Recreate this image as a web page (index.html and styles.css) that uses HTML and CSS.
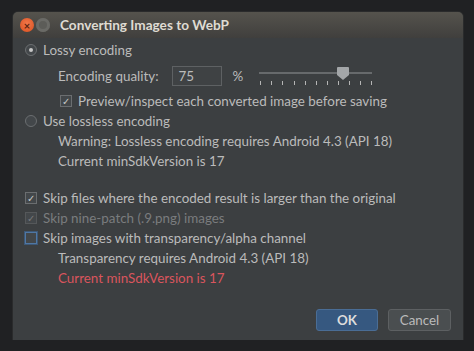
FILE: index.html
```html
<!DOCTYPE html>
<html lang="en">
<head>
    <meta charset="UTF-8">
    <title>Converting Images to WebP</title>
    <link rel="stylesheet" href="styles.css">
</head>
<body>
    <div class="dialog">
        <div class="titlebar">
            <span class="win-btn close">&#215;</span>
            <span class="win-btn minimize"></span>
            <span class="title">Converting Images to WebP</span>
        </div>

        <div class="content">
            <div class="row">
                <span class="radio checked"></span>
                <span>Lossy encoding</span>
            </div>

            <div class="row quality indent">
                <span class="label">Encoding quality:</span>
                <span class="field">75</span>
                <span class="percent">%</span>
                <svg class="slider" width="116" height="22" viewBox="0 0 116 22">
                    <rect x="0" y="5" width="113" height="2" fill="#676a6c"/>
                    <g stroke="#b5b5b5" stroke-width="1">
                        <line x1="1.5" y1="14" x2="1.5" y2="18"/>
                        <line x1="12.5" y1="14" x2="12.5" y2="18"/>
                        <line x1="23.5" y1="14" x2="23.5" y2="18"/>
                        <line x1="35.5" y1="14" x2="35.5" y2="18"/>
                        <line x1="46.5" y1="14" x2="46.5" y2="18"/>
                        <line x1="57.5" y1="14" x2="57.5" y2="18"/>
                        <line x1="68.5" y1="14" x2="68.5" y2="18"/>
                        <line x1="79.5" y1="14" x2="79.5" y2="18"/>
                        <line x1="90.5" y1="14" x2="90.5" y2="18"/>
                        <line x1="101.5" y1="14" x2="101.5" y2="18"/>
                        <line x1="112.5" y1="14" x2="112.5" y2="18"/>
                    </g>
                    <path d="M79 0 L89 0 Q90 0 90 1 L90 8 L84 13 L78 8 L78 1 Q78 0 79 0 Z" fill="#a3a6a8"/>
                </svg>
            </div>

            <div class="row sub">
                <span class="check checked">&#10003;</span>
                <span>Preview/inspect each converted image before saving</span>
            </div>

            <div class="row">
                <span class="radio"></span>
                <span>Use lossless encoding</span>
            </div>
            <div class="row indent">Warning: Lossless encoding requires Android 4.3 (API 18)</div>
            <div class="row indent">Current minSdkVersion is 17</div>

            <div class="row group">
                <span class="check checked">&#10003;</span>
                <span>Skip files where the encoded result is larger than the original</span>
            </div>
            <div class="row disabled">
                <span class="check checked">&#10003;</span>
                <span>Skip nine-patch (.9.png) images</span>
            </div>
            <div class="row">
                <span class="check focused"></span>
                <span>Skip images with transparency/alpha channel</span>
            </div>
            <div class="row indent">Transparency requires Android 4.3 (API 18)</div>
            <div class="row indent error">Current minSdkVersion is 17</div>
        </div>

        <div class="buttons">
            <button class="btn primary">OK</button>
            <button class="btn">Cancel</button>
        </div>
    </div>
</body>
</html>
```

FILE: styles.css
```css
body {
    margin: 0;
    padding: 12px 0 0 13px;
    background-color: #202123;
    font-family: Lato, "Open Sans", sans-serif;
    font-size: 13.4px;
    color: #bbbbbb;
}

.dialog {
    width: 450px;
    height: 328px;
    background: #3c3f41;
    border-radius: 5px 5px 0 0;
    box-shadow: 0 0 0 1px #2a2b2c;
    display: flex;
    flex-direction: column;
}

.titlebar {
    height: 26px;
    display: flex;
    align-items: center;
    padding-left: 7px;
    border-radius: 5px 5px 0 0;
    background: linear-gradient(#55534d, #403f3d);
}

.win-btn {
    width: 14px;
    height: 14px;
    border-radius: 50%;
    margin-right: 2px;
    display: inline-flex;
    align-items: center;
    justify-content: center;
    font-size: 11px;
    line-height: 1;
    font-weight: bold;
}

.win-btn.close {
    background: radial-gradient(circle at 50% 40%, #f2774a, #d9501f);
    color: #5a2410;
}

.win-btn.minimize {
    background: #5c5c58;
    box-shadow: inset 0 0 0 3px #6a6a66;
}

.title {
    margin-left: 8px;
    font-weight: bold;
    font-size: 13.6px;
    color: #dfdbd2;
}

.content {
    padding: 2px 0 0 12px;
    flex: 1;
}

.row {
    height: 20px;
    display: flex;
    align-items: center;
}

.indent {
    padding-left: 33px;
}

.sub {
    padding-left: 35px;
}

.group {
    margin-top: 17px;
}

.quality {
    height: 31px;
}

.field {
    width: 42px;
    height: 18px;
    margin-left: 13px;
    padding-left: 6px;
    border: 1px solid #5e6163;
    background: #3f4244;
    display: flex;
    align-items: center;
}

.percent {
    margin-left: 11px;
}

.slider {
    margin-left: 16px;
    margin-top: 4px;
}

.radio {
    width: 10px;
    height: 10px;
    border: 1px solid #6b6e70;
    border-radius: 50%;
    background: #43474a;
    margin-right: 6px;
    display: flex;
    align-items: center;
    justify-content: center;
}

.radio.checked::after {
    content: "";
    width: 4px;
    height: 4px;
    border-radius: 50%;
    background: #c8c8c8;
}

.check {
    width: 10px;
    height: 10px;
    border: 1px solid #6b6e70;
    background: #43474a;
    margin-right: 6px;
    font-size: 10px;
    line-height: 10px;
    text-align: center;
    color: #c8c8c8;
}

.check.focused {
    border-color: #4f77a4;
    box-shadow: 0 0 0 1px #3d5877;
}

.disabled {
    color: #7a7c7e;
}

.disabled .check {
    color: #77797b;
    border-color: #55585a;
}

.error {
    color: #d9555d;
}

.buttons {
    display: flex;
    justify-content: flex-end;
    gap: 10px;
    padding: 0 12px 9px 0;
}

.btn {
    width: 63px;
    height: 22px;
    border: 1px solid #5d6062;
    border-radius: 3px;
    background: #4a4e50;
    color: #bbbbbb;
    font-family: Lato, "Open Sans", sans-serif;
    font-size: 13.4px;
}

.btn.primary {
    width: 62px;
    background: #365880;
    border-color: #4a6d95;
    color: #dcdcdc;
    font-weight: bold;
}
```
